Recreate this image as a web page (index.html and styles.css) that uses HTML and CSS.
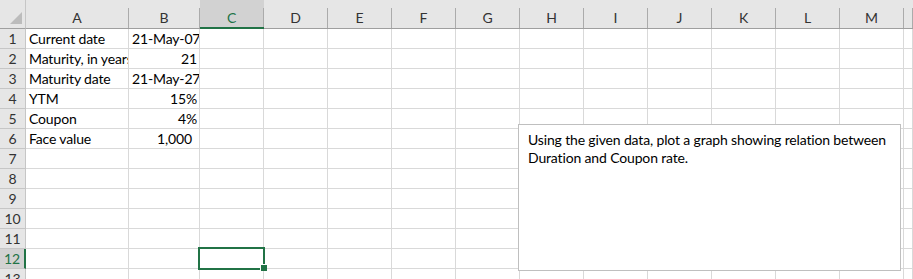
FILE: index.html
```html
<!DOCTYPE html>
<html lang="en">
<head>
<meta charset="utf-8">
<title>Sheet</title>
<link rel="stylesheet" href="styles.css">
</head>
<body>
<div class="page">
  <div class="sheet">
    <div class="corner"><svg class="tri" width="13" height="13" viewBox="0 0 13 13"><polygon points="12,0 12,12 0,12" fill="#bcbcbc"/></svg></div>
    <div class="ch"><span class="chl">A</span></div>
    <div class="ch"><span class="chl">B</span></div>
    <div class="ch ch-sel"><span class="chl">C</span></div>
    <div class="ch"><span class="chl">D</span></div>
    <div class="ch"><span class="chl">E</span></div>
    <div class="ch"><span class="chl">F</span></div>
    <div class="ch"><span class="chl">G</span></div>
    <div class="ch"><span class="chl">H</span></div>
    <div class="ch"><span class="chl">I</span></div>
    <div class="ch"><span class="chl">J</span></div>
    <div class="ch"><span class="chl">K</span></div>
    <div class="ch"><span class="chl">L</span></div>
    <div class="ch"><span class="chl">M</span></div>
    <div class="ch"><span class="chl"></span></div>

    <div class="rh">1</div><div class="c">Current date</div><div class="c r">21-May-07</div><div class="c"></div><div class="c"></div><div class="c"></div><div class="c"></div><div class="c"></div><div class="c"></div><div class="c"></div><div class="c"></div><div class="c"></div><div class="c"></div><div class="c"></div><div class="c"></div>
    <div class="rh">2</div><div class="c">Maturity, in years</div><div class="c r">21</div><div class="c"></div><div class="c"></div><div class="c"></div><div class="c"></div><div class="c"></div><div class="c"></div><div class="c"></div><div class="c"></div><div class="c"></div><div class="c"></div><div class="c"></div><div class="c"></div>
    <div class="rh">3</div><div class="c">Maturity date</div><div class="c r">21-May-27</div><div class="c"></div><div class="c"></div><div class="c"></div><div class="c"></div><div class="c"></div><div class="c"></div><div class="c"></div><div class="c"></div><div class="c"></div><div class="c"></div><div class="c"></div><div class="c"></div>
    <div class="rh">4</div><div class="c">YTM</div><div class="c r">15%</div><div class="c"></div><div class="c"></div><div class="c"></div><div class="c"></div><div class="c"></div><div class="c"></div><div class="c"></div><div class="c"></div><div class="c"></div><div class="c"></div><div class="c"></div><div class="c"></div>
    <div class="rh">5</div><div class="c">Coupon</div><div class="c r">4%</div><div class="c"></div><div class="c"></div><div class="c"></div><div class="c"></div><div class="c"></div><div class="c"></div><div class="c"></div><div class="c"></div><div class="c"></div><div class="c"></div><div class="c"></div><div class="c"></div>
    <div class="rh">6</div><div class="c">Face value</div><div class="c r acct">1,000</div><div class="c"></div><div class="c"></div><div class="c"></div><div class="c"></div><div class="c"></div><div class="c"></div><div class="c"></div><div class="c"></div><div class="c"></div><div class="c"></div><div class="c"></div><div class="c"></div>
    <div class="rh">7</div><div class="c"></div><div class="c"></div><div class="c"></div><div class="c"></div><div class="c"></div><div class="c"></div><div class="c"></div><div class="c"></div><div class="c"></div><div class="c"></div><div class="c"></div><div class="c"></div><div class="c"></div><div class="c"></div>
    <div class="rh">8</div><div class="c"></div><div class="c"></div><div class="c"></div><div class="c"></div><div class="c"></div><div class="c"></div><div class="c"></div><div class="c"></div><div class="c"></div><div class="c"></div><div class="c"></div><div class="c"></div><div class="c"></div><div class="c"></div>
    <div class="rh">9</div><div class="c"></div><div class="c"></div><div class="c"></div><div class="c"></div><div class="c"></div><div class="c"></div><div class="c"></div><div class="c"></div><div class="c"></div><div class="c"></div><div class="c"></div><div class="c"></div><div class="c"></div><div class="c"></div>
    <div class="rh">10</div><div class="c"></div><div class="c"></div><div class="c"></div><div class="c"></div><div class="c"></div><div class="c"></div><div class="c"></div><div class="c"></div><div class="c"></div><div class="c"></div><div class="c"></div><div class="c"></div><div class="c"></div><div class="c"></div>
    <div class="rh">11</div><div class="c"></div><div class="c"></div><div class="c"></div><div class="c"></div><div class="c"></div><div class="c"></div><div class="c"></div><div class="c"></div><div class="c"></div><div class="c"></div><div class="c"></div><div class="c"></div><div class="c"></div><div class="c"></div>
    <div class="rh rh-sel">12</div><div class="c"></div><div class="c"></div><div class="c sel"><span class="handle"></span></div><div class="c"></div><div class="c"></div><div class="c"></div><div class="c"></div><div class="c"></div><div class="c"></div><div class="c"></div><div class="c"></div><div class="c"></div><div class="c"></div><div class="c"></div>
    <div class="rh">13</div><div class="c"></div><div class="c"></div><div class="c"></div><div class="c"></div><div class="c"></div><div class="c"></div><div class="c"></div><div class="c"></div><div class="c"></div><div class="c"></div><div class="c"></div><div class="c"></div><div class="c"></div><div class="c"></div>
  </div>
  <div class="note">Using the given data, plot a graph showing relation between<br>Duration and Coupon rate.</div>
</div>
</body>
</html>
```

FILE: styles.css
```css
html, body {
  margin: 0;
  padding: 0;
  background: #ffffff;
}
body {
  width: 913px;
  height: 279px;
  overflow: hidden;
  font-family: Lato, "Open Sans", sans-serif;
  font-size: 14px;
  letter-spacing: -0.15px;
  color: #000;
}
.page {
  position: relative;
  width: 913px;
  height: 279px;
  overflow: hidden;
}
.sheet {
  display: grid;
  grid-template-columns: 26px 103px 71px repeat(11, 64px) 1fr;
  grid-template-rows: 29px repeat(13, 20px);
}
.corner,
.ch {
  background: #e6e6e6;
  border-bottom: 1px solid #9f9f9f;
  box-sizing: border-box;
  padding-top: 8px;
  display: flex;
  flex-direction: column;
}
.corner {
  border-right: 1px solid #c6c6c6;
  padding-top: 12px;
  padding-left: 10px;
}
.tri {
  display: block;
}
.chl {
  flex: 1;
  border-right: 1px solid #ababab;
  text-align: center;
  line-height: 20px;
  color: #333;
}
.ch-sel {
  background: #d2d2d2;
  border-bottom: 2px solid #217346;
}
.ch-sel .chl {
  color: #217346;
  line-height: 19px;
}
.rh {
  background: #e6e6e6;
  border-right: 1px solid #c6c6c6;
  border-bottom: 1px solid #c6c6c6;
  box-sizing: border-box;
  text-align: center;
  line-height: 19px;
  color: #333;
}
.rh-sel {
  background: #d2d2d2;
  border-right: 2px solid #217346;
  color: #217346;
}
.c {
  border-right: 1px solid #d9d9d9;
  border-bottom: 1px solid #d9d9d9;
  box-sizing: border-box;
  padding: 0 3px;
  line-height: 19px;
  white-space: nowrap;
  overflow: hidden;
}
.c.r {
  text-align: right;
  padding-right: 2px;
}
.c.acct {
  padding-right: 7px;
}
.c.sel {
  position: relative;
  overflow: visible;
}
.c.sel::before {
  content: "";
  position: absolute;
  left: -2px;
  top: -2px;
  width: 67px;
  height: 23px;
  box-sizing: border-box;
  border: 2px solid #217346;
  z-index: 2;
}
.handle {
  position: absolute;
  left: 60px;
  top: 15px;
  width: 7px;
  height: 7px;
  box-sizing: border-box;
  background: #217346;
  border-left: 1px solid #fff;
  border-top: 1px solid #fff;
  z-index: 3;
}
.note {
  position: absolute;
  left: 518px;
  top: 124px;
  width: 383px;
  height: 147px;
  box-sizing: border-box;
  border: 1px solid #bfbfbf;
  background: #fff;
  padding: 6px 9px;
  line-height: 18px;
  white-space: nowrap;
  color: #000;
}
```
